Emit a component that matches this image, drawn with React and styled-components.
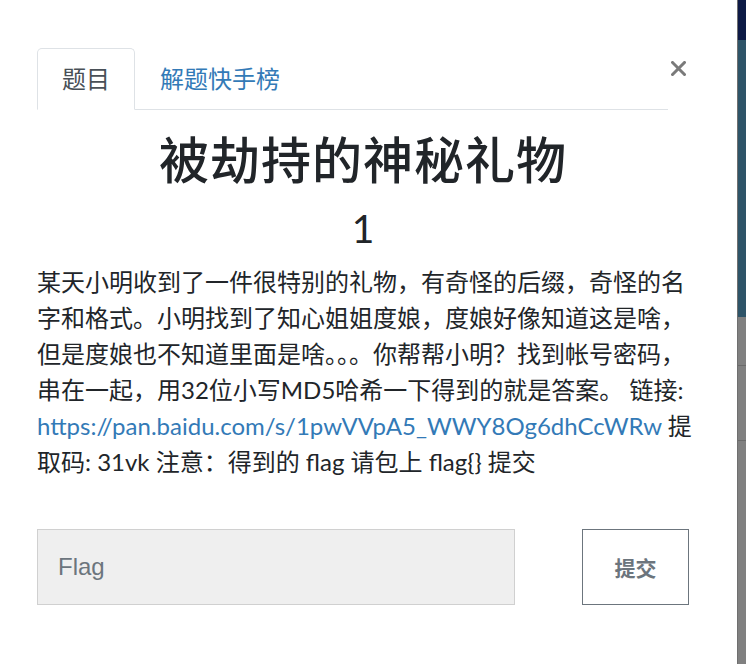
import React from "react";
import styled, { createGlobalStyle } from "styled-components";

const GlobalStyle = createGlobalStyle`
  html, body { margin: 0; padding: 0; background: #ffffff; }
  body {
    font-family: Lato, "Noto Sans CJK SC", sans-serif;
    color: #212529;
    overflow: hidden;
  }
  * { box-sizing: border-box; }
`;

const Page = styled.div`
  display: flex;
  height: 664px;
  width: 746px;
  overflow: hidden;
`;

const Modal = styled.div`
  flex: 1;
  background: #ffffff;
  padding: 48px 0 0 37px;
`;

const Content = styled.div`
  width: 652px;
`;

const Header = styled.div`
  display: flex;
  align-items: flex-start;
`;

const Tabs = styled.div`
  flex: 1;
  display: flex;
  border-bottom: 1px solid #dee2e6;
`;

const Tab = styled.div`
  font-size: 24px;
  line-height: 36px;
  padding: 12px 24px;
  margin-bottom: -1px;
  border: 1px solid ${(p) => (p.$active ? "#dee2e6" : "transparent")};
  border-bottom-color: ${(p) => (p.$active ? "#ffffff" : "transparent")};
  border-radius: 5px 5px 0 0;
  background: ${(p) => (p.$active ? "#ffffff" : "transparent")};
  color: ${(p) => (p.$active ? "#495057" : "#337ab7")};
  white-space: nowrap;
`;

const Close = styled.div`
  width: 21px;
  margin-top: 12px;
  height: 16px;
  display: flex;
  justify-content: center;
  align-items: center;
  color: #7a7a7a;
`;

const Title = styled.h3`
  margin: 20px 0 0;
  font-size: 50px;
  line-height: 60px;
  font-weight: 500;
  letter-spacing: 1px;
  text-align: center;
  color: #212529;
`;

const Value = styled.h4`
  margin: 14px 0 0;
  font-size: 39px;
  line-height: 48px;
  font-weight: 400;
  text-align: center;
  color: #212529;
`;

const Description = styled.p`
  margin: 12px 0 0;
  width: 658px;
  font-size: 24px;
  line-height: 36px;
  color: #212529;
`;

const Link = styled.a`
  color: #337ab7;
  text-decoration: none;
`;

const SubmitRow = styled.div`
  margin-top: 49px;
  display: flex;
  justify-content: space-between;
  align-items: stretch;
`;

const FlagInput = styled.input`
  width: 478px;
  height: 76px;
  background: #efefef;
  border: 1px solid #d0d0d0;
  padding: 0 20px;
  font-family: "Liberation Sans", Arial, sans-serif;
  font-size: 24px;
  color: #495057;
  outline: none;
  &::placeholder { color: #6c757d; }
`;

const SubmitButton = styled.button`
  width: 107px;
  height: 76px;
  background: #ffffff;
  border: 1px solid #6c757d;
  border-radius: 0;
  color: #6c757d;
  font-family: Lato, "Noto Sans CJK SC", sans-serif;
  font-size: 21px;
  font-weight: 700;
  padding: 0;
`;

const Backdrop = styled.div`
  width: 9px;
  display: flex;
  flex-direction: column;
  border-left: 1px solid #6f6f6f;
`;

const Segment = styled.div`
  height: ${(p) => (p.$h ? `${p.$h}px` : "auto")};
  flex: ${(p) => (p.$h ? "none" : "1")};
  background: ${(p) => p.$bg};
  border-top: ${(p) => (p.$line ? "1px solid #6a6a6a" : "none")};
`;

export default function App() {
  return (
    <>
      <GlobalStyle />
      <Page>
        <Modal>
          <Content>
            <Header>
              <Tabs>
                <Tab $active>题目</Tab>
                <Tab>解题快手榜</Tab>
              </Tabs>
              <Close aria-label="Close">
                <svg width="15" height="15" viewBox="0 0 15 15">
                  <path d="M1.5 1.5 L13.5 13.5 M13.5 1.5 L1.5 13.5" stroke="currentColor" strokeWidth="3" strokeLinecap="square" />
                </svg>
              </Close>
            </Header>
            <Title>被劫持的神秘礼物</Title>
            <Value>1</Value>
            <Description>
              某天小明收到了一件很特别的礼物，有奇怪的后缀，奇怪的名字和格式。小明找到了知心姐姐度娘，度娘好像知道这是啥，但是度娘也不知道里面是啥。。。你帮帮小明？找到帐号密码，串在一起，用32位小写MD5哈希一下得到的就是答案。 链接:{" "}
              <Link href="#">https://pan.baidu.com/s/1pwVVpA5_WWY8Og6dhCcWRw</Link> 提取码: 31vk 注意：得到的 flag 请包上 flag{"{}"} 提交
            </Description>
            <SubmitRow>
              <FlagInput placeholder="Flag" />
              <SubmitButton>提交</SubmitButton>
            </SubmitRow>
          </Content>
        </Modal>
        <Backdrop>
          <Segment $h={40} $bg="#0d1a45" />
          <Segment $h={277} $bg="#2e5468" />
          <Segment $h={48} $bg="#808080" />
          <Segment $h={75} $bg="#808080" $line />
          <Segment $bg="#808080" $line />
        </Backdrop>
      </Page>
    </>
  );
}
